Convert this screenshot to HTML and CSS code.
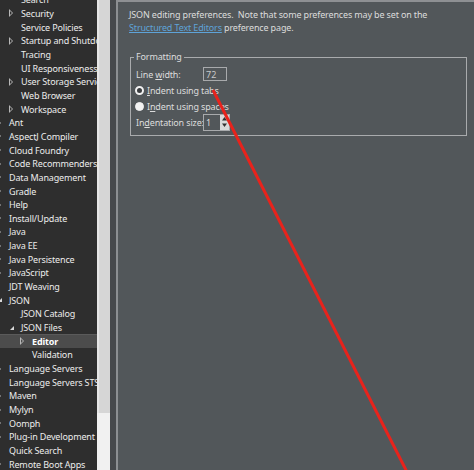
FILE: index.html
```html
<!DOCTYPE html>
<html lang="en">
<head>
  <meta charset="UTF-8">
  <title>Preferences - JSON Editor</title>
  <link rel="stylesheet" href="styles.css">
</head>
<body>

  <div class="prefs">
    <div class="nav">
      <div class="tree">
        <div class="row l2">Search</div>
        <div class="row l2"><span class="tw closed"></span>Security</div>
        <div class="row l2">Service Policies</div>
        <div class="row l2"><span class="tw closed"></span>Startup and Shutdown</div>
        <div class="row l2">Tracing</div>
        <div class="row l2">UI Responsiveness</div>
        <div class="row l2"><span class="tw closed"></span>User Storage Service</div>
        <div class="row l2">Web Browser</div>
        <div class="row l2"><span class="tw closed"></span>Workspace</div>
        <div class="row l1"><span class="tw closed"></span>Ant</div>
        <div class="row l1"><span class="tw closed"></span>AspectJ Compiler</div>
        <div class="row l1"><span class="tw closed"></span>Cloud Foundry</div>
        <div class="row l1"><span class="tw closed"></span>Code Recommenders</div>
        <div class="row l1"><span class="tw closed"></span>Data Management</div>
        <div class="row l1"><span class="tw closed"></span>Gradle</div>
        <div class="row l1"><span class="tw closed"></span>Help</div>
        <div class="row l1"><span class="tw closed"></span>Install/Update</div>
        <div class="row l1"><span class="tw closed"></span>Java</div>
        <div class="row l1"><span class="tw closed"></span>Java EE</div>
        <div class="row l1"><span class="tw closed"></span>Java Persistence</div>
        <div class="row l1"><span class="tw closed"></span>JavaScript</div>
        <div class="row l1"><span class="tw"></span>JDT Weaving</div>
        <div class="row l1"><span class="tw open"></span>JSON</div>
        <div class="row l2"><span class="tw"></span>JSON Catalog</div>
        <div class="row l2"><span class="tw open"></span>JSON Files</div>
        <div class="row l3 selected"><span class="tw closed"></span>Editor</div>
        <div class="row l3"><span class="tw"></span>Validation</div>
        <div class="row l1"><span class="tw closed"></span>Language Servers</div>
        <div class="row l1"><span class="tw"></span>Language Servers STS</div>
        <div class="row l1"><span class="tw closed"></span>Maven</div>
        <div class="row l1"><span class="tw closed"></span>Mylyn</div>
        <div class="row l1"><span class="tw closed"></span>Oomph</div>
        <div class="row l1"><span class="tw closed"></span>Plug-in Development</div>
        <div class="row l1"><span class="tw"></span>Quick Search</div>
        <div class="row l1"><span class="tw closed"></span>Remote Boot Apps</div>
      </div>
    </div>

    <div class="scrollbar"><div class="thumb"></div></div>
    <div class="sash"></div>

    <div class="page">
      <p class="intro">
        JSON editing preferences.&nbsp; Note that some preferences may be set on the<br>
        <a href="#">Structured Text Editors</a> preference page.
      </p>

      <fieldset class="group">
        <legend>Formatting</legend>
        <div class="field">
          <label>Line <u>w</u>idth:</label>
          <input class="text" type="text" value="72">
        </div>
        <div class="choice">
          <span class="radio on"></span>
          <span><u>I</u>ndent using tabs</span>
        </div>
        <div class="choice">
          <span class="radio"></span>
          <span>I<u>n</u>dent using spaces</span>
        </div>
        <div class="field">
          <label>In<u>d</u>entation size:</label>
          <div class="spinner">
            <span class="value">1</span>
            <span class="arrows">
              <svg width="9" height="14" viewBox="0 0 9 14">
                <path d="M4.5 2 L7 5.5 L2 5.5 Z" fill="#333"/>
                <path d="M4.5 12 L7 8.5 L2 8.5 Z" fill="#333"/>
              </svg>
            </span>
          </div>
        </div>
      </fieldset>
    </div>

    <!-- red marker drawn over the screenshot -->
    <svg class="marker" width="474" height="470" viewBox="0 0 474 470">
      <line x1="213" y1="90" x2="407" y2="472" stroke="#e8231c" stroke-width="3"/>
    </svg>
  </div>

</body>
</html>
```

FILE: styles.css
```css
body {
  margin: 0;
  background-color: #2e2e2e;
  font-family: "Noto Sans", "Open Sans", sans-serif;
  font-size: 9px;
  letter-spacing: -0.15px;
  overflow: hidden;
}

.prefs {
  position: relative;
  display: flex;
  width: 474px;
  height: 470px;
  overflow: hidden;
}

/* left tree */
.nav {
  width: 97px;
  flex: none;
  background-color: #2e2e2e;
  overflow: hidden;
}

.tree {
  margin-top: -7px;
}

.row {
  display: flex;
  align-items: center;
  height: 13.67px;
  white-space: nowrap;
  color: #ececec;
}

.row.l1 { padding-left: 0; margin-left: -3px; }
.row.l2 { padding-left: 9px; }
.row.l3 { padding-left: 20px; }

.row.l2:not(:has(.tw)) { padding-left: 21px; }
.row.l1:not(:has(.tw)) { padding-left: 12px; }

.row.selected {
  background-color: #4c4c4c;
  box-shadow: inset 0 1px 0 #5a5a5a;
  color: #fff;
  font-weight: bold;
}

.tw {
  width: 12px;
  height: 8px;
  flex: none;
  position: relative;
}

.tw.closed::before {
  content: "";
  position: absolute;
  left: 0;
  top: 0;
  border-left: 4px solid #b8b8b8;
  border-top: 4px solid transparent;
  border-bottom: 4px solid transparent;
}

.tw.closed::after {
  content: "";
  position: absolute;
  left: 1px;
  top: 2px;
  border-left: 2px solid #2e2e2e;
  border-top: 2px solid transparent;
  border-bottom: 2px solid transparent;
}

.row.selected .tw.closed::after {
  border-left-color: #4c4c4c;
}

.tw.open::before {
  content: "";
  position: absolute;
  left: 1px;
  top: 2px;
  border-right: 4px solid #d8d8d8;
  border-top: 4px solid transparent;
}

/* scrollbar and sash */
.scrollbar {
  width: 13px;
  flex: none;
  background-color: #f1f1f1;
}

.thumb {
  height: 413px;
  background-color: #d6d6d6;
  border-left: 2px solid #e6e6e6;
}

.sash {
  width: 6px;
  flex: none;
  background-color: #46494c;
  border-right: 2px solid #8c8f92;
}

/* right page */
.page {
  flex: 1;
  background-color: #52575a;
  border-top: 2px solid #8e9093;
  padding: 6px 7px 0 11px;
  color: #dcdcdc;
}

.intro {
  margin: 0;
  line-height: 13px;
}

.intro a {
  color: #5ea3d8;
}

.group {
  margin: 17px 0 0 1px;
  padding: 3px 6px 6px 5px;
  border: 1px solid #a9abad;
  height: 74px;
  box-sizing: content-box;
}

.group legend {
  padding: 0 2px;
  margin-left: -2px;
  line-height: 12px;
}

.field,
.choice {
  display: flex;
  align-items: center;
  height: 16px;
  white-space: nowrap;
}

.field label {
  width: 67px;
  flex: none;
}

.text {
  width: 18px;
  height: 12px;
  padding: 0 2px;
  border: 1px solid #a8aaac;
  background-color: #52575a;
  color: #c8c8c8;
  font: inherit;
}

.choice {
  gap: 3px;
  margin-left: -1px;
}

.radio {
  width: 7px;
  height: 7px;
  border-radius: 50%;
  background-color: #f2f2f2;
  border: 1px solid #f2f2f2;
}

.radio.on {
  background-color: #3a3d40;
  border: 2px solid #f2f2f2;
  width: 5px;
  height: 5px;
}

.spinner {
  display: flex;
  height: 15px;
  border: 1px solid #a8aaac;
}

.spinner .value {
  width: 14px;
  padding-left: 2px;
  line-height: 15px;
}

.spinner .arrows {
  width: 9px;
  background-color: #d9d9d9;
  display: flex;
  align-items: center;
}

.marker {
  position: absolute;
  left: 0;
  top: 0;
  pointer-events: none;
}
```
